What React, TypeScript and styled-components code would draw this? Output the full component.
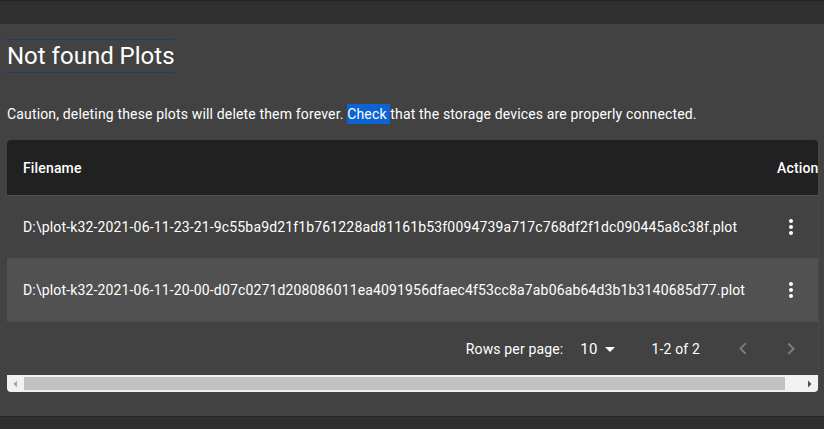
import React from "react";
import styled, { createGlobalStyle } from "styled-components";

const GlobalStyle = createGlobalStyle`
  html, body {
    margin: 0;
    padding: 0;
    background: #303030;
    font-family: Roboto, "Liberation Sans", sans-serif;
    color: #fff;
  }
`;

const Shell = styled.div`
  display: flex;
  flex-direction: column;
  height: 429px;
`;

const TopBar = styled.div`
  height: 23px;
  background: #2f2f2f;
  border-top: 1px solid #222;
`;

const BottomBar = styled.div`
  flex: 1;
  background: #2f2f2f;
  border-top: 1px solid #262626;
`;

const Page = styled.main`
  height: 392px;
  background: #424242;
  padding: 15px 6px 0 7px;
  box-sizing: border-box;
`;

const Title = styled.h1`
  display: inline-block;
  margin: 0;
  font-size: 24px;
  font-weight: 400;
  line-height: 32px;
  border-top: 1px solid #1d3c75;
  border-bottom: 1px solid #1d3c75;
`;

const Caption = styled.p`
  margin: 31px 0 16px;
  font-size: 14px;
  line-height: 20px;
  letter-spacing: 0.16px;
`;

const Selected = styled.span`
  background: #0c63d2;
  padding: 2px 0;
`;

const Paper = styled.div`
  background: #424242;
  border-radius: 4px;
  box-shadow: 1px 0 0 #4a4a4a;
  overflow: hidden;
`;

const Table = styled.table`
  width: 828px;
  table-layout: fixed;
  border-collapse: collapse;
`;

const HeadCell = styled.th<{ $width?: number }>`
  ${(p) => (p.$width ? `width: ${p.$width}px;` : "")}
  height: 55px;
  padding: 0 0 0 16px;
  background: #212121;
  text-align: left;
  font-size: 14px;
  font-weight: 500;
  letter-spacing: 0.15px;
  border-bottom: 1px solid #515151;
  white-space: nowrap;
  overflow: hidden;

  &:first-child {
    border-top-left-radius: 4px;
  }
`;

const Row = styled.tr<{ $striped?: boolean }>`
  background: ${(p) => (p.$striped ? "#515151" : "#424242")};
`;

const Cell = styled.td`
  height: 62px;
  padding: 0 0 0 16px;
  font-size: 14px;
  letter-spacing: 0.15px;
  border-bottom: 1px solid #4c4c4c;
  white-space: nowrap;
`;

const IconButton = styled.button<{ $disabled?: boolean }>`
  display: inline-flex;
  align-items: center;
  justify-content: center;
  padding: 0;
  border: 0;
  background: none;
  color: ${(p) => (p.$disabled ? "rgba(255,255,255,0.3)" : "#fff")};
  cursor: pointer;
`;

const Kebab = styled(IconButton)`
  width: 28px;
  height: 28px;
  margin-top: 1px;
`;

const Pager = styled.div`
  display: flex;
  align-items: center;
  justify-content: flex-end;
  height: 53px;
  padding-right: 3px;
  font-size: 14px;
  letter-spacing: 0.15px;
`;

const Select = styled.div`
  display: flex;
  align-items: center;
  margin: 0 30px 0 17px;
  font-size: 15px;
`;

const PageButton = styled(IconButton)`
  width: 48px;
  height: 48px;
`;

const Displayed = styled.span`
  margin-right: 19px;
`;

const ScrollBar = styled.div`
  display: flex;
  height: 17px;
  background: #f1f1f1;
`;

const ScrollArrow = styled.div`
  display: flex;
  align-items: center;
  justify-content: center;
  width: 17px;
  flex: none;
`;

const ScrollTrack = styled.div`
  flex: 1;
  padding: 2px 16px 2px 0;
  display: flex;
`;

const ScrollThumb = styled.div`
  flex: 1;
  background: #c1c1c1;
`;

const files = [
  "D:\\plot-k32-2021-06-11-23-21-9c55ba9d21f1b761228ad81161b53f0094739a717c768df2f1dc090445a8c38f.plot",
  "D:\\plot-k32-2021-06-11-20-00-d07c0271d208086011ea4091956dfaec4f53cc8a7ab06ab64d3b1b3140685d77.plot",
];

const MoreVert = () => (
  <svg width="24" height="24" viewBox="0 0 24 24" fill="currentColor">
    <path d="M12 8c1.1 0 2-.9 2-2s-.9-2-2-2-2 .9-2 2 .9 2 2 2zm0 2c-1.1 0-2 .9-2 2s.9 2 2 2 2-.9 2-2-.9-2-2-2zm0 6c-1.1 0-2 .9-2 2s.9 2 2 2 2-.9 2-2-.9-2-2-2z" />
  </svg>
);

const App = () => (
  <Shell>
    <GlobalStyle />
    <TopBar />
    <Page>
      <Title>Not found Plots</Title>
      <Caption>
        Caution, deleting these plots will delete them forever. <Selected>Check </Selected>that the storage devices
        are properly connected.
      </Caption>
      <Paper>
        <Table>
          <thead>
            <tr>
              <HeadCell>Filename</HeadCell>
              <HeadCell $width={58}>Actions</HeadCell>
            </tr>
          </thead>
          <tbody>
            {files.map((file, i) => (
              <Row key={file} $striped={i % 2 === 1}>
                <Cell>{file}</Cell>
                <Cell>
                  <Kebab>
                    <MoreVert />
                  </Kebab>
                </Cell>
              </Row>
            ))}
          </tbody>
        </Table>
        <Pager>
          <span>Rows per page:</span>
          <Select>
            10
            <svg width="24" height="24" viewBox="0 0 24 24" fill="#fff">
              <path d="M7 10l5 5 5-5z" />
            </svg>
          </Select>
          <Displayed>1-2 of 2</Displayed>
          <PageButton $disabled>
            <svg width="24" height="24" viewBox="0 0 24 24" fill="currentColor">
              <path d="M15.41 16.09l-4.58-4.59 4.58-4.59L14 5.5l-6 6 6 6z" />
            </svg>
          </PageButton>
          <PageButton $disabled>
            <svg width="24" height="24" viewBox="0 0 24 24" fill="currentColor">
              <path d="M8.59 16.34l4.58-4.59-4.58-4.59L10 5.75l6 6-6 6z" />
            </svg>
          </PageButton>
        </Pager>
        <ScrollBar>
          <ScrollArrow>
            <svg width="5" height="8" viewBox="0 0 5 8">
              <path d="M4 0.5 L4 7.5 L0.5 4 Z" fill="#a3a3a3" />
            </svg>
          </ScrollArrow>
          <ScrollTrack>
            <ScrollThumb />
          </ScrollTrack>
          <ScrollArrow>
            <svg width="5" height="8" viewBox="0 0 5 8">
              <path d="M1 0.5 L1 7.5 L4.5 4 Z" fill="#505050" />
            </svg>
          </ScrollArrow>
        </ScrollBar>
      </Paper>
    </Page>
    <BottomBar />
  </Shell>
);

export default App;
